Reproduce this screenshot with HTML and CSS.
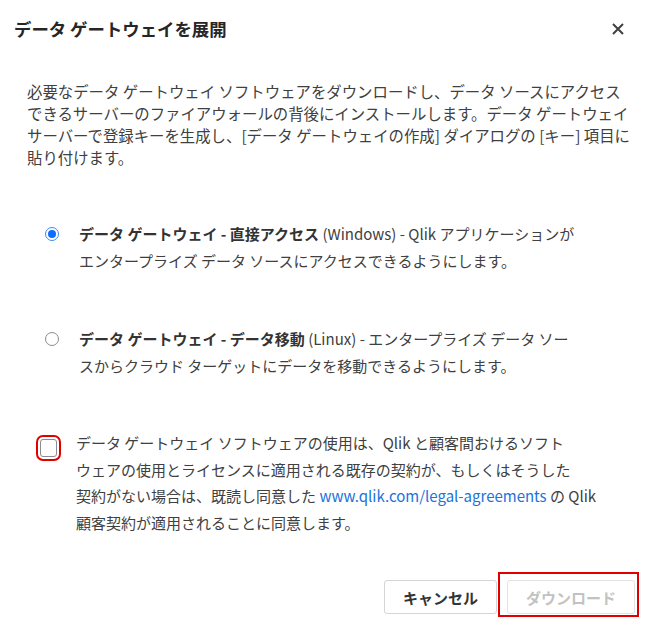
FILE: index.html
```html
<!DOCTYPE html>
<html lang="ja">
<head>
<meta charset="utf-8">
<title>データ ゲートウェイを展開</title>
<link rel="stylesheet" href="styles.css">
</head>
<body>
<div class="dialog">
  <header class="dialog-header">
    <h1 class="dialog-title">データ ゲートウェイを展開</h1>
    <button class="close-btn" aria-label="閉じる">
      <svg width="14" height="14" viewBox="0 0 14 14"><path d="M2 2 L12 12 M12 2 L2 12" stroke="#404040" stroke-width="2" fill="none"/></svg>
    </button>
  </header>
  <p class="intro">必要なデータ ゲートウェイ ソフトウェアをダウンロードし、データ ソースにアクセス<br>できるサーバーのファイアウォールの背後にインストールします。データ ゲートウェイ<br>サーバーで登録キーを生成し、[データ ゲートウェイの作成] ダイアログの [キー] 項目に<br>貼り付けます。</p>
  <div class="options">
    <label class="option">
      <span class="radio checked"><span class="dot"></span></span>
      <span class="option-text"><b>データ ゲートウェイ - 直接アクセス</b> (Windows) - Qlik アプリケーションが<br>エンタープライズ データ ソースにアクセスできるようにします。</span>
    </label>
    <label class="option">
      <span class="radio"></span>
      <span class="option-text"><b>データ ゲートウェイ - データ移動</b> (Linux) - エンタープライズ データ ソー<br>スからクラウド ターゲットにデータを移動できるようにします。</span>
    </label>
  </div>
  <label class="agree">
    <span class="checkbox"></span>
    <span class="agree-text">データ ゲートウェイ ソフトウェアの使用は、Qlik と顧客間おけるソフト<br>ウェアの使用とライセンスに適用される既存の契約が、もしくはそうした<br>契約がない場合は、既読し同意した <a href="#" class="link">www.qlik.com/legal-agreements</a> の Qlik<br>顧客契約が適用されることに同意します。</span>
  </label>
  <footer class="actions">
    <button class="btn">キャンセル</button>
    <span class="highlight"><button class="btn btn-disabled" disabled>ダウンロード</button></span>
  </footer>
</div>
</body>
</html>
```
FILE: styles.css
```css
html, body {
  margin: 0;
  padding: 0;
  background: #ffffff;
}
body {
  font-family: "Noto Sans CJK JP", "Noto Sans", sans-serif;
  color: #404040;
  width: 650px;
  height: 632px;
  overflow: hidden;
}
.dialog {
  display: flex;
  flex-direction: column;
}
.dialog-header {
  display: flex;
  align-items: center;
  justify-content: space-between;
  height: 58px;
  padding: 0 25px 0 14px;
}
.dialog-title {
  margin: 0;
  font-size: 17.4px;
  font-weight: 700;
  color: #262626;
  line-height: 24px;
}
.close-btn {
  border: 0;
  background: none;
  padding: 0;
  width: 14px;
  height: 14px;
  display: flex;
}
.intro {
  margin: 22px 0 0 27px;
  width: 615px;
  white-space: nowrap;
  font-size: 15.4px;
  line-height: 22px;
}
.options {
  display: flex;
  flex-direction: column;
  gap: 52px;
  margin-top: 53px;
  padding-left: 45px;
}
.option {
  display: flex;
  align-items: flex-start;
}
.radio {
  flex: none;
  box-sizing: border-box;
  width: 14px;
  height: 14px;
  margin-top: 6px;
  border-radius: 50%;
  border: 1.5px solid #8c8c8c;
  display: flex;
  align-items: center;
  justify-content: center;
}
.radio.checked {
  border-color: #3d8bf5;
}
.dot {
  width: 8px;
  height: 8px;
  border-radius: 50%;
  background: #0d6efd;
}
.option-text {
  margin-left: 20px;
  white-space: nowrap;
  font-size: 15px;
  line-height: 26.5px;
}
.option-text b {
  font-weight: 700;
  color: #333333;
}
.agree {
  display: flex;
  align-items: flex-start;
  margin-top: 51px;
  padding-left: 40px;
}
.checkbox {
  flex: none;
  box-sizing: border-box;
  width: 17px;
  height: 18px;
  margin-top: 9px;
  border: 1.5px solid #8c8c8c;
  border-radius: 3px;
  outline: 2px solid #e00000;
  outline-offset: 2px;
}
.agree-text {
  margin-left: 19px;
  white-space: nowrap;
  font-size: 15px;
  line-height: 26.5px;
}
.link {
  color: #1a73d9;
  text-decoration: none;
}
.actions {
  display: flex;
  justify-content: flex-end;
  align-items: flex-start;
  margin-top: 36px;
  padding-right: 11px;
}
.btn {
  font-family: inherit;
  font-size: 15px;
  font-weight: 700;
  color: #333333;
  background: #ffffff;
  border: 1px solid #d5d5d5;
  border-radius: 3px;
  height: 34px;
  width: 113px;
  margin-top: 8px;
  padding: 0;
}
.highlight {
  display: flex;
  margin-left: 1px;
  border: 2px solid #e00000;
  padding: 6px 2px 1px 7px;
}
.btn-disabled {
  width: 128px;
  margin-top: 0;
  color: #c2c2c2;
  border-color: #e3e3e3;
}
```
